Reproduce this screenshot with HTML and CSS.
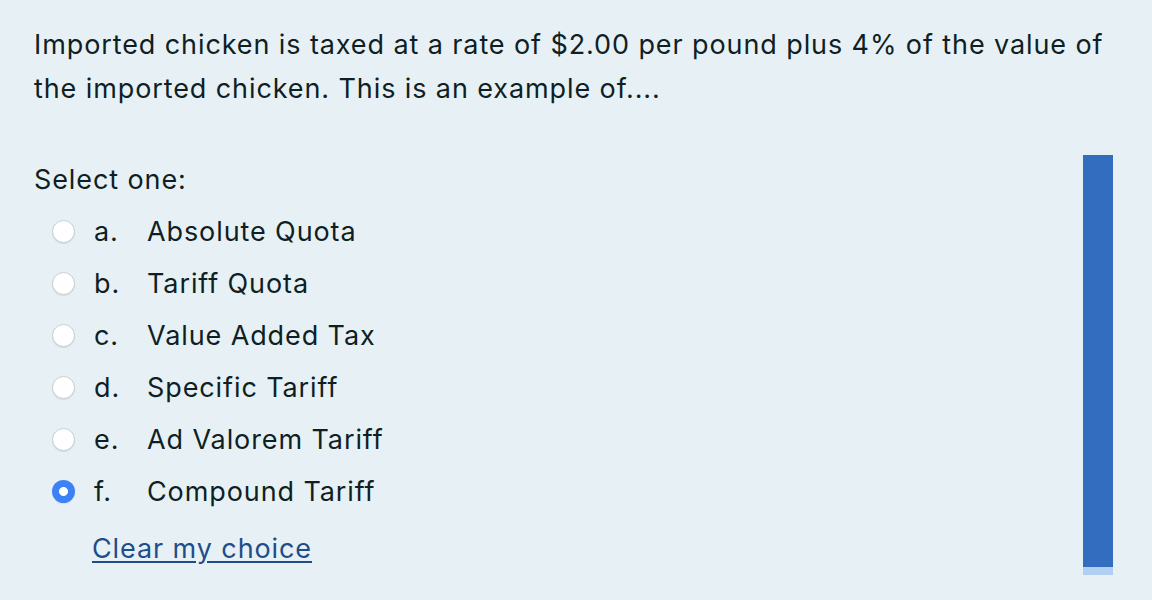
FILE: index.html
```html
<!DOCTYPE html>
<html lang="en">
<head>
  <meta charset="UTF-8" />
  <title>Question</title>
  <link rel="stylesheet" href="styles.css">
</head>
<body>

<div class="que">
  <div class="qtext">
    Imported chicken is taxed at a rate of $2.00 per pound plus 4% of the value of the imported chicken. This is an example of....
  </div>

  <div class="ablock">
    <div class="prompt">Select one:</div>
    <div class="answer">
      <label class="opt"><input type="radio" name="q1"><span class="num">a.</span><span>Absolute Quota</span></label>
      <label class="opt"><input type="radio" name="q1"><span class="num">b.</span><span>Tariff Quota</span></label>
      <label class="opt"><input type="radio" name="q1"><span class="num">c.</span><span>Value Added Tax</span></label>
      <label class="opt"><input type="radio" name="q1"><span class="num">d.</span><span>Specific Tariff</span></label>
      <label class="opt"><input type="radio" name="q1"><span class="num">e.</span><span>Ad Valorem Tariff</span></label>
      <label class="opt"><input type="radio" name="q1" checked><span class="num">f.</span><span>Compound Tariff</span></label>
    </div>
    <a href="#" class="clear">Clear my choice</a>
  </div>
</div>

<div class="scroll-bar"><div class="scroll-end"></div></div>

</body>
</html>
```

FILE: styles.css
```css
body {
  margin: 0;
  background: #e7f1f5;
  color: #0f1f24;
  font-family: Inter, "Liberation Sans", Arial, sans-serif;
  font-size: 27px;
  letter-spacing: 0.9px;
  height: 600px;
  overflow: hidden;
}

.que {
  padding: 23px 0 0 34px;
}

.qtext {
  max-width: 1080px;
  line-height: 44px;
}

.ablock {
  margin-top: 47px;
}

.prompt {
  line-height: 44px;
}

.answer {
  display: flex;
  flex-direction: column;
  margin-top: 3px;
  margin-left: 18px;
}

.opt {
  display: flex;
  align-items: center;
  height: 52px;
}

.opt input {
  appearance: none;
  -webkit-appearance: none;
  width: 23px;
  height: 23px;
  margin: 0 19px 0 0;
  border-radius: 50%;
  background: #fff;
  border: 1px solid #c9cdd0;
  box-shadow: 0 1px 1px rgba(0,0,0,0.08);
}

.opt input:checked {
  border: none;
  background: radial-gradient(circle, #fff 0 4px, #3b82f6 5px);
}

.num {
  width: 53px;
}

.clear {
  display: inline-block;
  margin: 15px 0 0 58px;
  color: #1f4d8a;
  text-decoration: underline;
  text-underline-offset: 3px;
}

/* right-hand block nav strip */
.scroll-bar {
  position: absolute;
  left: 1083px;
  top: 155px;
  width: 30px;
  height: 420px;
  background: #336dc0;
  display: flex;
  flex-direction: column;
  justify-content: flex-end;
}

.scroll-end {
  height: 8px;
  background: #b1cff0;
}
```
